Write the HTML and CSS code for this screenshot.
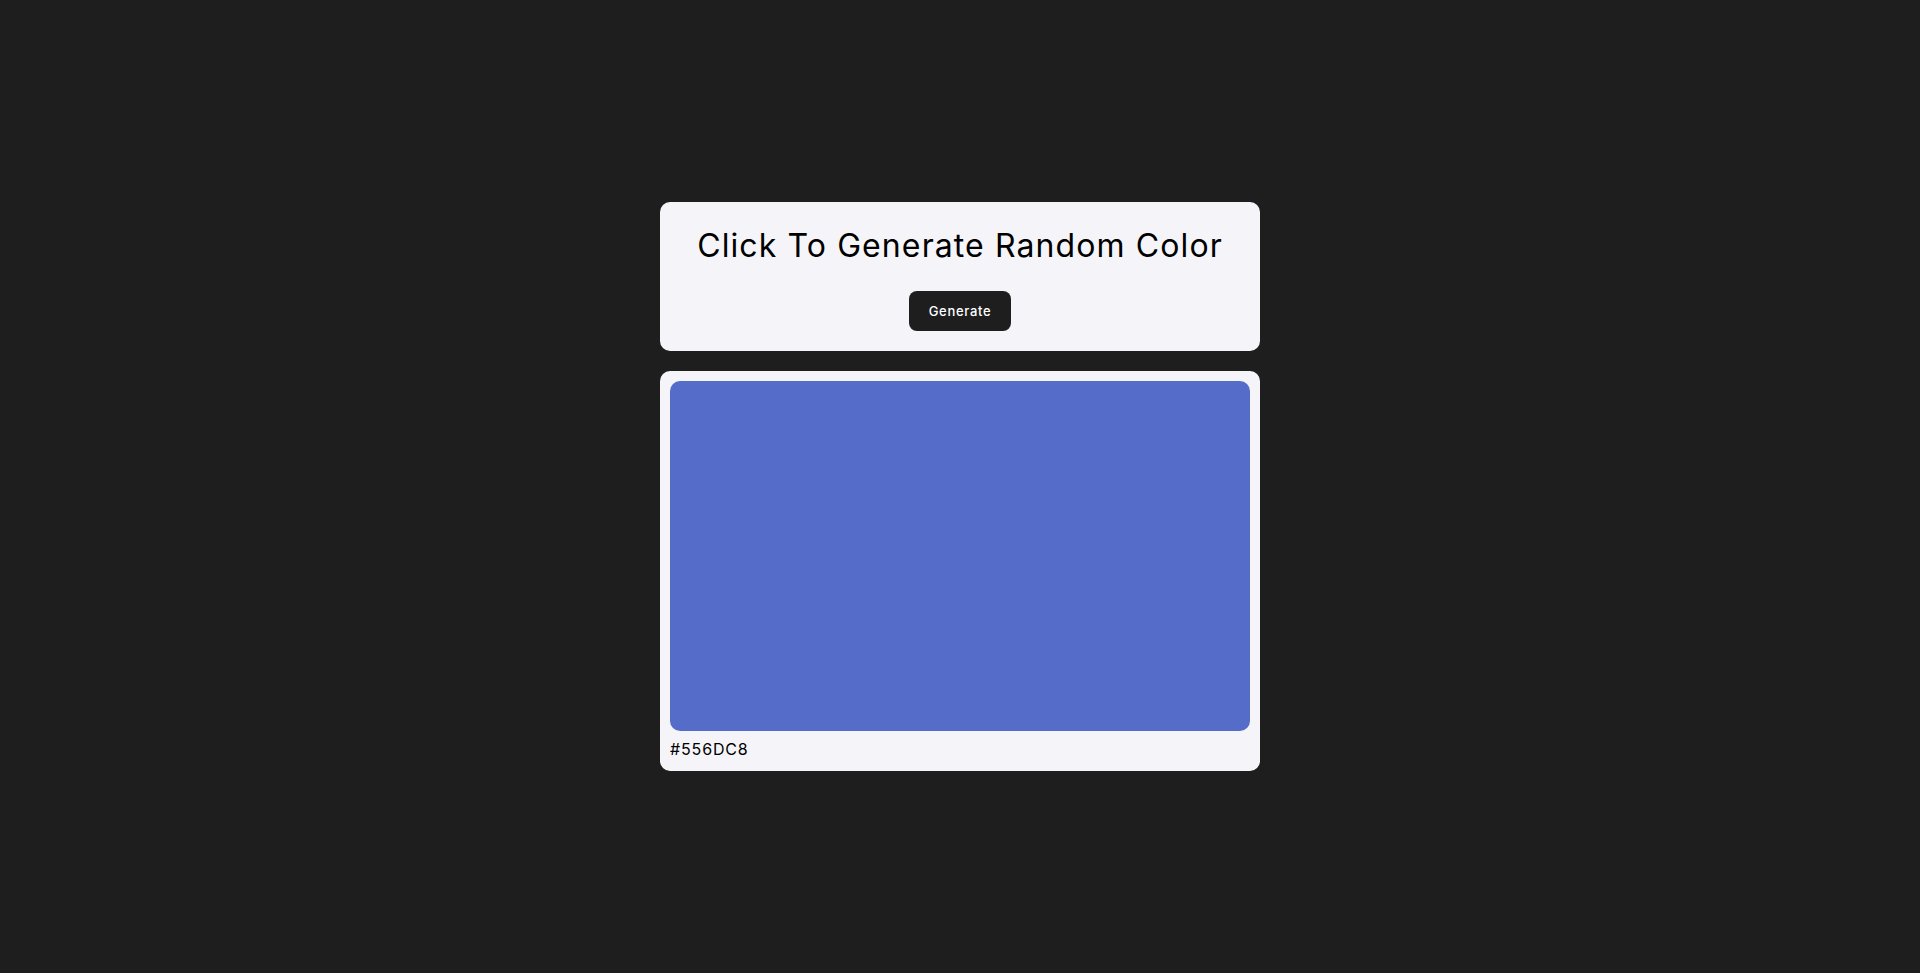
FILE: index.html
```html
<!DOCTYPE html>
<html lang="en">
<head>
<meta charset="utf-8">
<title>Random Color Generator</title>
<link rel="stylesheet" href="styles.css">
</head>
<body>
  <main class="app">
    <section class="card header-card">
      <h1 class="title">Click To Generate Random Color</h1>
      <button class="generate-btn" type="button">Generate</button>
    </section>
    <section class="card color-card">
      <div class="color-box"></div>
      <p class="color-code">#556DC8</p>
    </section>
  </main>
</body>
</html>
```

FILE: styles.css
```css
* {
  box-sizing: border-box;
}

html, body {
  margin: 0;
  padding: 0;
}

body {
  background: #1e1e1e;
  font-family: "Inter", "Open Sans", sans-serif;
  color: #000;
  min-height: 100vh;
}

.app {
  min-height: 100vh;
  display: flex;
  flex-direction: column;
  align-items: center;
  justify-content: center;
  gap: 20px;
}

.card {
  width: 600px;
  background: #f5f5f9;
  border-radius: 10px;
}

.header-card {
  padding: 20px;
  display: flex;
  flex-direction: column;
  align-items: center;
}

.title {
  margin: 0 0 21px;
  font-size: 32px;
  line-height: 48px;
  font-weight: 400;
  letter-spacing: 1.1px;
}

.generate-btn {
  font-family: "Inter", "Open Sans", sans-serif;
  font-size: 13px;
  line-height: 20px;
  font-weight: 500;
  letter-spacing: 0.7px;
  color: #fff;
  background: #1e1e1e;
  border: none;
  border-radius: 8px;
  padding: 10px 20px;
  cursor: pointer;
}

.color-card {
  padding: 10px;
}

.color-box {
  height: 350px;
  border-radius: 10px;
  background: #556DC8;
}

.color-code {
  margin: 6px 0 0;
  font-size: 16px;
  line-height: 24px;
  letter-spacing: 0.85px;
}
```
